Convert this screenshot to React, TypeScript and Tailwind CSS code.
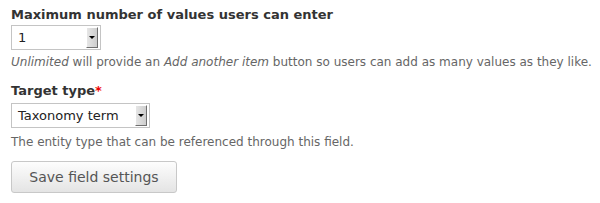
import React from 'react';

const font = { fontFamily: '"DejaVu Sans", Verdana, sans-serif' };

function FakeSelect({ value, width }: { value: string; width: string }) {
  return (
    <div className={`flex h-[25px] items-center border border-[#c4c4c4] bg-white pl-[6px] pr-[2px] ${width}`}>
      <span className="flex-1 text-[13px] leading-none text-[#222]">{value}</span>
      <span className="flex h-[21px] w-[12px] items-center justify-center border-t border-l border-t-white border-l-white border-r border-b border-r-[#6f6f6f] border-b-[#6f6f6f] bg-gradient-to-r from-[#e6e6e6] to-[#cdcdcd]">
        <svg width="6" height="3" viewBox="0 0 6 3">
          <path d="M0 0H6L3 3Z" fill="#000" />
        </svg>
      </span>
    </div>
  );
}

export default function App() {
  return (
    <div className="min-h-[203px] w-[600px] bg-white pl-[11px] pt-[6px]" style={font}>
      <div className="text-[13px] font-bold leading-[18px] text-[#333]">Maximum number of values users can enter</div>
      <div className="mt-[1px]">
        <FakeSelect value="1" width="w-[90px]" />
      </div>
      <p className="mt-[4px] text-[12px] leading-[16px] text-[#666]">
        <em>Unlimited</em> will provide an <em>Add another item</em> button so users can add as many values as they like.
      </p>

      <div className="mt-[12px] text-[13px] font-bold leading-[18px] text-[#333]">
        Target type<span className="text-[#e00]">*</span>
      </div>
      <div className="mt-[3px]">
        <FakeSelect value="Taxonomy term" width="w-[139px]" />
      </div>
      <p className="mt-[6px] text-[12px] leading-[16px] text-[#666]">The entity type that can be referenced through this field.</p>

      <button className="mt-[11px] h-[32px] w-[166px] rounded-[3px] border border-[#c8c8c8] bg-gradient-to-b from-[#fdfdfd] to-[#e4e4e4] text-[14px] text-[#555]">
        Save field settings
      </button>
    </div>
  );
}
